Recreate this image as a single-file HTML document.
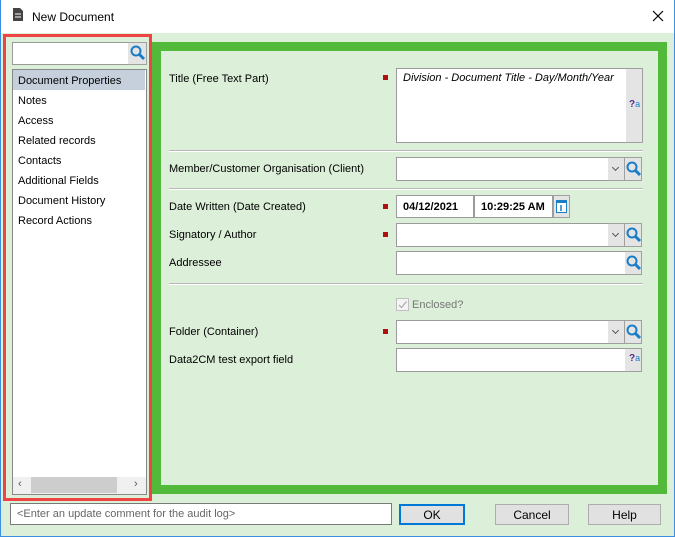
<!DOCTYPE html>
<html><head><style>
*{box-sizing:border-box;margin:0;padding:0}
body{width:675px;height:537px;position:relative;font-family:"Liberation Sans",sans-serif;font-size:11px;color:#000;background:#dcefd9;overflow:hidden}
.a{position:absolute}
.in{position:absolute;background:#fff;border:1px solid #9a9a9a}
.btn{position:absolute;background:#e1e1e1;border:1px solid #adadad;text-align:center;line-height:20px;font-size:12px}
.lbl{position:absolute;left:169px;font-size:11px}
.req{position:absolute;left:383px;width:5px;height:5px;background:#b01010}
.sep{position:absolute;left:169px;width:474px;height:2px;border-top:1px solid #b8b8b8;border-bottom:1px solid #fff}
.dd{position:absolute;width:17px;background:#e4e4e4;border:1px solid #a0a0a0;border-left:none}
.dd::after{content:"";position:absolute;left:5px;top:7px;width:4px;height:4px;border-right:1px solid #555;border-bottom:1px solid #555;transform:rotate(45deg)}
.sb{position:absolute;width:17px;background:#e4e4e4;border:1px solid #a0a0a0}
.li{position:absolute;left:18px;font-size:11px}
</style></head><body>
<div class="a" style="left:0;top:0;width:675px;height:33px;background:#fff"></div>
<div class="a" style="left:0;top:0;width:1px;height:537px;background:#3c8ee0"></div>
<div class="a" style="right:0;top:0;width:1px;height:537px;background:#3c8ee0"></div>
<div class="a" style="left:0;bottom:0;width:675px;height:1px;background:#3c8ee0"></div>
<svg class="a" style="left:13px;top:8px" width="11" height="14"><path d="M0 0H7L10 3V13H0Z" fill="#444"/><path d="M2 6H8M2 9H8" stroke="#fff"/></svg>
<div class="a" style="left:32px;top:10px;font-size:12px">New Document</div>
<svg class="a" style="left:652px;top:10px" width="12" height="12"><path d="M1 1L11 11M11 1L1 11" stroke="#000" stroke-width="1.2"/></svg>

<div class="a" style="left:3px;top:34px;width:149px;height:467px;border:3px solid #f04444"></div>
<div class="in" style="left:12px;top:42px;width:117px;height:23px"></div>
<div class="sb" style="left:128px;top:42px;width:19px;height:23px;border-left:none"></div>
<svg class="a" style="left:130px;top:44px" width="16" height="18"><circle cx="6" cy="7" r="4.5" fill="none" stroke="#1a7dc8" stroke-width="2"/><path d="M9 10L14 15" stroke="#1a7dc8" stroke-width="3"/></svg>
<div class="a" style="left:12px;top:69px;width:135px;height:426px;background:#fff;border:1px solid #888"></div>
<div class="a" style="left:13px;top:70px;width:132px;height:20px;background:#c5d0dc"></div>
<div class="li" style="top:75px">Document Properties</div>
<div class="li" style="top:95px">Notes</div>
<div class="li" style="top:115px">Access</div>
<div class="li" style="top:135px">Related records</div>
<div class="li" style="top:155px">Contacts</div>
<div class="li" style="top:175px">Additional Fields</div>
<div class="li" style="top:195px">Document History</div>
<div class="li" style="top:215px">Record Actions</div>
<div class="a" style="left:13px;top:477px;width:133px;height:17px;background:#f0f0f0"></div>
<div class="a" style="left:31px;top:477px;width:86px;height:16px;background:#cdcdcd"></div>
<div class="a" style="left:18px;top:478px;font-size:11px;color:#555">‹</div>
<div class="a" style="left:134px;top:478px;font-size:11px;color:#555">›</div>

<div class="a" style="left:152px;top:42px;width:515px;height:452px;border:9px solid #52b93a"></div>

<div class="lbl" style="top:73px">Title (Free Text Part)</div>
<div class="req" style="top:75px"></div>
<div class="in" style="left:396px;top:68px;width:231px;height:75px;font-style:italic;padding:3px 6px;font-size:11px">Division - Document Title - Day/Month/Year</div>
<div class="sb" style="left:626px;top:68px;height:75px;border-left:none"></div>
<div class="a" style="left:629px;top:99px;font-size:10px;color:#5a2a8a;font-weight:bold">?<span style="color:#1a7dc8;font-weight:normal;font-size:9px">a</span></div>
<div class="sep" style="top:150px"></div>

<div class="lbl" style="top:163px">Member/Customer Organisation (Client)</div>
<div class="in" style="left:396px;top:157px;width:213px;height:24px"></div>
<div class="dd" style="left:608px;top:157px;height:24px"></div>
<div class="sb" style="left:625px;top:157px;height:24px;border-left:none"></div>
<svg class="a" style="left:626px;top:160px" width="16" height="18"><circle cx="6" cy="7" r="4.5" fill="none" stroke="#1a7dc8" stroke-width="2"/><path d="M9 10L14 15" stroke="#1a7dc8" stroke-width="3"/></svg>
<div class="sep" style="top:188px"></div>

<div class="lbl" style="top:201px">Date Written (Date Created)</div>
<div class="req" style="top:204px"></div>
<div class="in" style="left:396px;top:195px;width:78px;height:23px;font-weight:bold;padding:5px 6px">04/12/2021</div>
<div class="in" style="left:474px;top:195px;width:79px;height:23px;font-weight:bold;padding:5px 6px">10:29:25 AM</div>
<div class="sb" style="left:553px;top:195px;height:23px"></div>
<svg class="a" style="left:555px;top:198px" width="13" height="16"><rect x="1.5" y="2.5" width="10" height="12" fill="#fff" stroke="#1a7dc8"/><rect x="1" y="2" width="11" height="3" fill="#1a7dc8"/><path d="M6 7V13" stroke="#1a7dc8" stroke-width="1.5"/></svg>

<div class="lbl" style="top:229px">Signatory / Author</div>
<div class="req" style="top:232px"></div>
<div class="in" style="left:396px;top:223px;width:213px;height:24px"></div>
<div class="dd" style="left:608px;top:223px;height:24px"></div>
<div class="sb" style="left:625px;top:223px;height:24px;border-left:none"></div>
<svg class="a" style="left:626px;top:226px" width="16" height="18"><circle cx="6" cy="7" r="4.5" fill="none" stroke="#1a7dc8" stroke-width="2"/><path d="M9 10L14 15" stroke="#1a7dc8" stroke-width="3"/></svg>

<div class="lbl" style="top:257px">Addressee</div>
<div class="in" style="left:396px;top:251px;width:230px;height:24px"></div>
<div class="sb" style="left:625px;top:251px;height:24px;border-left:none"></div>
<svg class="a" style="left:626px;top:254px" width="16" height="18"><circle cx="6" cy="7" r="4.5" fill="none" stroke="#1a7dc8" stroke-width="2"/><path d="M9 10L14 15" stroke="#1a7dc8" stroke-width="3"/></svg>
<div class="sep" style="top:283px"></div>

<div class="a" style="left:396px;top:298px;width:13px;height:13px;border:1px solid #c0c0c0;background:#f4f4f4"></div>
<svg class="a" style="left:397px;top:299px" width="11" height="11"><path d="M2 6L4.5 8.5L9.5 2.5" fill="none" stroke="#aaa" stroke-width="1.2"/></svg>
<div class="a" style="left:412px;top:299px;color:#777">Enclosed?</div>

<div class="lbl" style="top:326px">Folder (Container)</div>
<div class="req" style="top:329px"></div>
<div class="in" style="left:396px;top:320px;width:213px;height:24px"></div>
<div class="dd" style="left:608px;top:320px;height:24px"></div>
<div class="sb" style="left:625px;top:320px;height:24px;border-left:none"></div>
<svg class="a" style="left:626px;top:323px" width="16" height="18"><circle cx="6" cy="7" r="4.5" fill="none" stroke="#1a7dc8" stroke-width="2"/><path d="M9 10L14 15" stroke="#1a7dc8" stroke-width="3"/></svg>

<div class="lbl" style="top:354px">Data2CM test export field</div>
<div class="in" style="left:396px;top:348px;width:230px;height:24px"></div>
<div class="sb" style="left:625px;top:348px;height:24px;border-left:none"></div>
<div class="a" style="left:629px;top:353px;font-size:10px;color:#5a2a8a;font-weight:bold">?<span style="color:#1a7dc8;font-weight:normal;font-size:9px">a</span></div>

<div class="in" style="left:10px;top:503px;width:382px;height:22px;border-color:#7a7a7a;color:#666;padding:4px 6px;font-size:11px">&lt;Enter an update comment for the audit log&gt;</div>
<div class="btn" style="left:399px;top:504px;width:66px;height:21px;border:2px solid #0078d7;line-height:18px">OK</div>
<div class="btn" style="left:495px;top:504px;width:74px;height:21px">Cancel</div>
<div class="btn" style="left:588px;top:504px;width:73px;height:21px">Help</div>
</body></html>
